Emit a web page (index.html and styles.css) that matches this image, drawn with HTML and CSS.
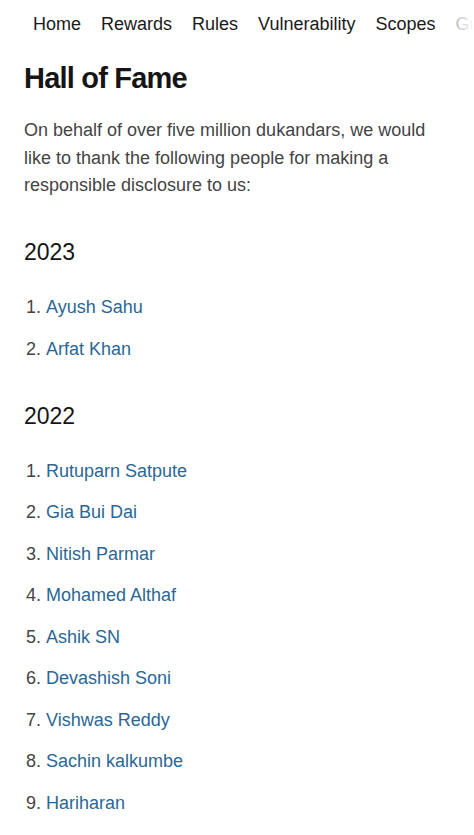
FILE: index.html
```html
<!DOCTYPE html>
<html lang="en">
<head>
<meta charset="utf-8">
<title>Hall of Fame</title>
<link rel="stylesheet" href="styles.css">
</head>
<body>
<nav class="nav">
  <a class="nav-link" href="#">Home</a>
  <a class="nav-link" href="#">Rewards</a>
  <a class="nav-link" href="#">Rules</a>
  <a class="nav-link" href="#">Vulnerability</a>
  <a class="nav-link" href="#">Scopes</a>
  <a class="nav-link" href="#">Guidelines</a>
</nav>
<main class="content">
  <h1 class="title">Hall of Fame</h1>
  <p class="intro">On behalf of over five million dukandars, we would like to thank the following people for making a responsible disclosure to us:</p>
  <h2 class="year">2023</h2>
  <ol class="names">
    <li><a href="#">Ayush Sahu</a></li>
    <li><a href="#">Arfat Khan</a></li>
  </ol>
  <h2 class="year">2022</h2>
  <ol class="names">
    <li><a href="#">Rutuparn Satpute</a></li>
    <li><a href="#">Gia Bui Dai</a></li>
    <li><a href="#">Nitish Parmar</a></li>
    <li><a href="#">Mohamed Althaf</a></li>
    <li><a href="#">Ashik SN</a></li>
    <li><a href="#">Devashish Soni</a></li>
    <li><a href="#">Vishwas Reddy</a></li>
    <li><a href="#">Sachin kalkumbe</a></li>
    <li><a href="#">Hariharan</a></li>
  </ol>
</main>
</body>
</html>
```
FILE: styles.css
```css
html, body {
  margin: 0;
  padding: 0;
  background: #ffffff;
}
body {
  font-family: "Liberation Sans", Arial, sans-serif;
  color: #1a1a1a;
}
.nav {
  position: relative;
  display: flex;
  gap: 20px;
  padding: 12px 0 0 33px;
  white-space: nowrap;
  overflow: hidden;
  font-size: 18px;
  line-height: 24px;
}
.nav::after {
  content: "";
  position: absolute;
  top: 0;
  right: 0;
  width: 36px;
  height: 100%;
  background: linear-gradient(to right, rgba(255,255,255,0), rgba(255,255,255,0.72) 55%, #ffffff);
}
.nav-link {
  color: #1a1a1a;
  text-decoration: none;
  flex: none;
}
.content {
  padding: 0 24px;
}
.title {
  margin: 24px 0 0;
  font-size: 29px;
  line-height: 36px;
  font-weight: 700;
  letter-spacing: -0.8px;
  color: #151515;
}
.intro {
  margin: 21px 0 0;
  font-size: 18px;
  line-height: 27.5px;
  color: #444444;
}
.year {
  margin: 38.5px 0 0;
  font-size: 23px;
  line-height: 28px;
  font-weight: 400;
  color: #151515;
}
.names {
  margin: 28px 0 0;
  padding-left: 22px;
  font-size: 18px;
  line-height: 27.5px;
  color: #444444;
}
.names li + li {
  margin-top: 14px;
}
.names a {
  color: #2a6796;
  text-decoration: none;
}
```
